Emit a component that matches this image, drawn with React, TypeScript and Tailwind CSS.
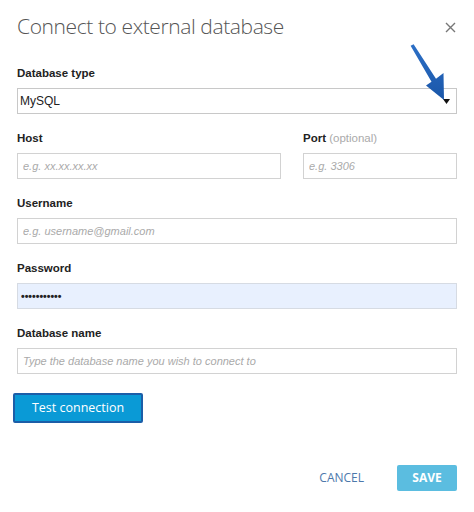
import { useState } from 'react';

function Field({ label, children }: { label: React.ReactNode; children: React.ReactNode }) {
  return (
    <div className="flex flex-col">
      <label className="mb-[8px] text-[11.5px] leading-[13px] font-bold text-[#222]">{label}</label>
      {children}
    </div>
  );
}

const inputCls =
  "h-[26px] w-full border border-[#d2d2d2] bg-white pl-[5px] text-[11px] text-[#333] outline-none placeholder:italic placeholder:text-[#aaa] font-['Liberation_Sans',Arial,sans-serif]";

export default function App() {
  const [dbType] = useState('MySQL');

  return (
    <div className="relative min-h-[512px] w-[474px] bg-white px-[17px] font-['Liberation_Sans',Arial,sans-serif]">
      {/* header */}
      <div className="flex h-[54px] items-center justify-between">
        <h1 className="font-['Open_Sans',sans-serif] text-[21px] font-light tracking-[-0.4px] text-[#555]">
          Connect to external database
        </h1>
        <button className="mr-[1px] flex h-[12px] w-[12px] items-center justify-center text-[#777]">
          <svg width="11" height="11" viewBox="0 0 11 11" fill="none" stroke="currentColor" strokeWidth="1.4">
            <path d="M1 1L10 10M10 1L1 10" />
          </svg>
        </button>
      </div>

      <div className="mt-[13px] flex flex-col gap-[18px]">
        <Field label="Database type">
          <div className="flex h-[26px] items-center justify-between border border-[#c8c8c8] bg-white pl-[2px] pr-[6px] text-[12px] text-[#222]">
            <span>{dbType}</span>
            <svg width="7" height="5" viewBox="0 0 7 5">
              <path d="M0 0H7L3.5 5Z" fill="#111" />
            </svg>
          </div>
        </Field>

        <div className="flex">
          <div className="w-[264px]">
            <Field label="Host">
              <input className={inputCls} placeholder="e.g. xx.xx.xx.xx" />
            </Field>
          </div>
          <div className="ml-[22px] flex-1">
            <Field
              label={
                <>
                  Port <span className="font-normal text-[#aaa]">(optional)</span>
                </>
              }
            >
              <input className={inputCls} placeholder="e.g. 3306" />
            </Field>
          </div>
        </div>

        <Field label="Username">
          <input className={inputCls} placeholder="e.g. username@gmail.com" />
        </Field>

        <Field label="Password">
          <input
            type="password"
            readOnly
            defaultValue="secretpass1"
            className="h-[26px] w-full border border-[#d6dbe3] bg-[#e8f0fe] pl-[3px] text-[10.5px] font-bold text-[#222] outline-none"
          />
        </Field>

        <Field label="Database name">
          <input className={inputCls} placeholder="Type the database name you wish to connect to" />
        </Field>
      </div>

      <button className="-ml-[4px] mt-[19px] flex h-[30px] w-[130px] items-center justify-center rounded-[2px] border-2 border-[#1c5ea8] bg-[#0a9ad6] font-['Open_Sans',sans-serif] text-[12.5px] text-white">
        Test connection
      </button>

      <div className="mt-[42px] flex items-center justify-end">
        <button className="mr-[33px] font-['Open_Sans',sans-serif] text-[12px] text-[#4d78ab]">CANCEL</button>
        <button className="h-[26px] w-[60px] rounded-[2px] bg-[#5bbde0] font-['Open_Sans',sans-serif] text-[12px] font-bold text-white">
          SAVE
        </button>
      </div>

      {/* annotation arrow */}
      <svg className="pointer-events-none absolute left-[400px] top-[40px]" width="60" height="70" viewBox="0 0 60 70">
        <defs>
          <linearGradient id="arr" x1="0" y1="0" x2="0" y2="1">
            <stop offset="0" stopColor="#2c6fc6" />
            <stop offset="1" stopColor="#1a56a8" />
          </linearGradient>
        </defs>
        <path
          d="M13.6 4.2L36 38.8L43.5 33L44 60L26 45.5L31.5 41.8L10.6 5.8Z"
          fill="url(#arr)"
        />
      </svg>
    </div>
  );
}
